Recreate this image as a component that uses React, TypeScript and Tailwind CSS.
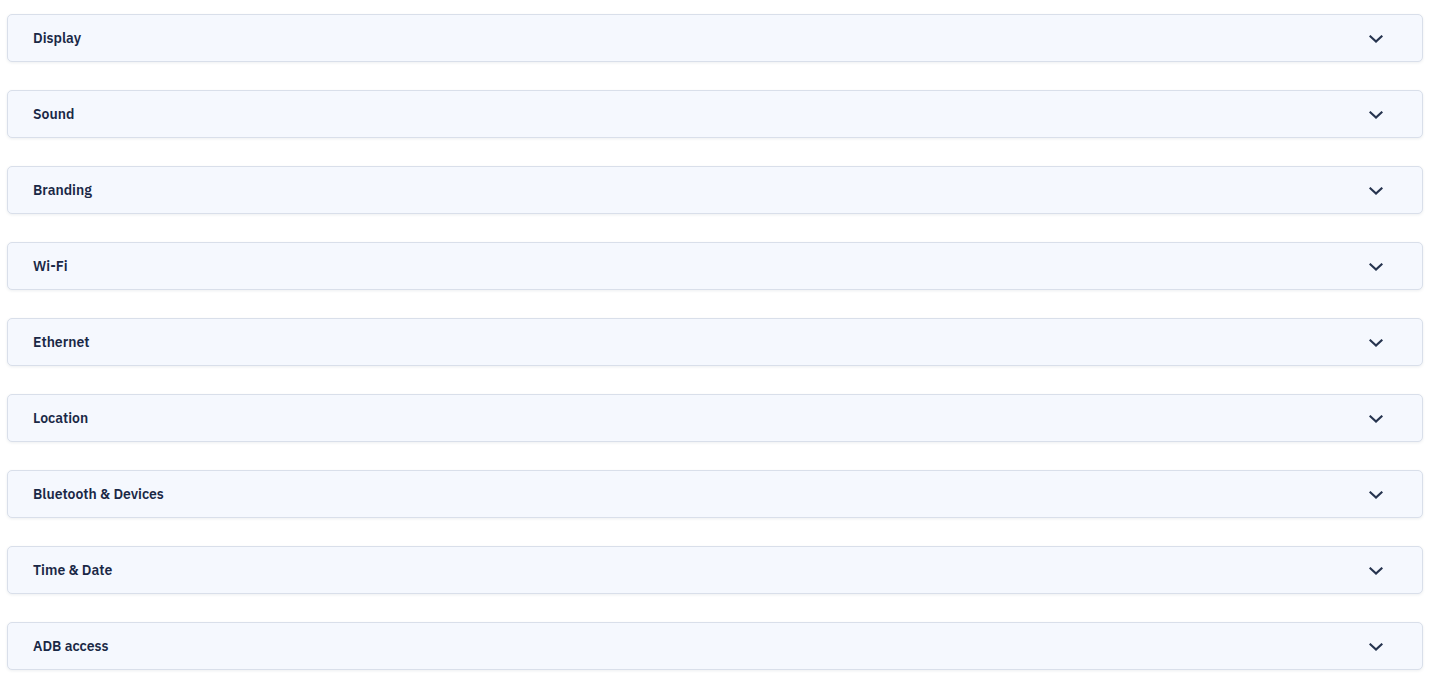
import React from 'react';

const sections = [
  'Display',
  'Sound',
  'Branding',
  'Wi-Fi',
  'Ethernet',
  'Location',
  'Bluetooth & Devices',
  'Time & Date',
  'ADB access',
];

function Chevron() {
  return (
    <svg width="14" height="8" viewBox="0 0 14 8" fill="none" className="mt-[2px] text-[#26344f]">
      <path d="M1.5 1.5L7 6.5L12.5 1.5" stroke="currentColor" strokeWidth="2.2" strokeLinecap="square" />
    </svg>
  );
}

function SettingsSection({ heading }: { heading: string }) {
  return (
    <div className="h-12 rounded-[5px] border border-[#d9dfea] bg-[#f5f8fe] shadow-[0_1px_3px_rgba(30,45,80,0.08)]">
      <button
        type="button"
        className="flex h-full w-full cursor-pointer items-center justify-between bg-transparent pl-[25px] pr-[39px] text-left"
      >
        <span className="text-[14px] font-semibold text-[#1a2846]">{heading}</span>
        <Chevron />
      </button>
    </div>
  );
}

export default function App() {
  return (
    <div
      className="min-h-screen bg-white pl-[7px] pr-[16px] pt-[14px]"
      style={{ fontFamily: '"IBM Plex Sans", Inter, "Noto Sans", sans-serif' }}
    >
      <div className="flex flex-col gap-[28px]">
        {sections.map((s) => (
          <SettingsSection key={s} heading={s} />
        ))}
      </div>
    </div>
  );
}
